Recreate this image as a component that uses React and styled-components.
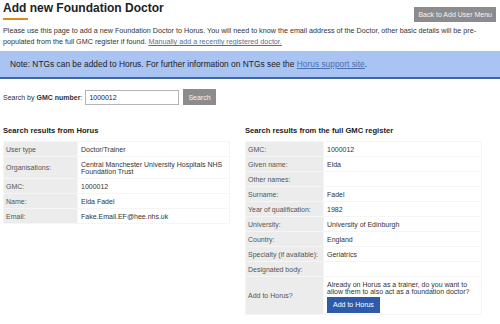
import React from "react";
import styled, { createGlobalStyle } from "styled-components";

const GlobalStyle = createGlobalStyle`
  html, body {
    margin: 0;
    padding: 0;
    background: #fff;
  }
  body {
    font-family: "Liberation Sans", Arial, sans-serif;
    color: #333;
  }
`;

const Page = styled.div`
  width: 500px;
  height: 324px;
  overflow: hidden;
  padding: 0 3px;
  box-sizing: border-box;
`;

const Header = styled.div`
  display: flex;
  justify-content: space-between;
  align-items: flex-start;
`;

const TitleBlock = styled.div`
  padding-top: 1px;
`;

const Title = styled.h1`
  margin: 0;
  font-size: 12px;
  line-height: 14px;
  font-weight: bold;
  color: #222;
`;

const TitleBar = styled.div`
  width: 25px;
  height: 2px;
  margin-top: 3px;
  background: #e08a16;
`;

const GreyButton = styled.button`
  border: none;
  background: #8c8c8c;
  color: #f4f4f4;
  font-family: inherit;
  font-size: ${(p) => p.$size || 7}px;
  padding: ${(p) => p.$pad || "0 5px"};
  height: ${(p) => p.$h || 15}px;
  margin-top: ${(p) => p.$top || 0}px;
  cursor: pointer;
`;

const Intro = styled.p`
  margin: 3px 0 0;
  font-size: 7.2px;
  line-height: 11px;
  color: #333;
`;

const SoftLink = styled.a`
  color: #5b6f8f;
  text-decoration: underline;
`;

const Note = styled.div`
  margin: 4px -3px 0;
  height: 26px;
  padding: 0 10px;
  display: flex;
  align-items: center;
  background: #a9c4f2;
  border-bottom: 2px solid #3d64a6;
  font-size: 8.4px;
  font-weight: normal;
  color: #222;
`;

const NoteLink = styled.a`
  color: #4a6fb3;
  text-decoration: underline;
`;

const SearchRow = styled.div`
  display: flex;
  align-items: center;
  margin-top: 10px;
  font-size: 7px;
  color: #333;
  gap: 3px;
`;

const Input = styled.input`
  width: 94px;
  height: 15px;
  box-sizing: border-box;
  border: 1px solid #b5b5b5;
  font-family: inherit;
  font-size: 7px;
  padding: 0 3px;
  color: #222;
  margin-right: 1px;
`;

const Columns = styled.div`
  display: grid;
  grid-template-columns: 242px 237px;
  margin-top: 21px;
`;

const Column = styled.div`
  display: flex;
  flex-direction: column;
  align-items: flex-start;
`;

const SectionTitle = styled.h2`
  margin: 0;
  font-size: 7.6px;
  line-height: 10px;
  font-weight: bold;
  color: #222;
`;

const Table = styled.table`
  width: ${(p) => p.$w}px;
  margin-top: 5px;
  border-collapse: separate;
  border-spacing: 1px;
  background: #f5f5f5;
  font-size: 7px;
  table-layout: fixed;
`;

const Label = styled.td`
  width: ${(p) => p.$w}px;
  background: #ececec;
  color: #555;
  padding: 0 2px;
  height: ${(p) => p.$h || 14}px;
  line-height: 7px;
  white-space: nowrap;
  vertical-align: middle;
`;

const Value = styled.td`
  background: #fff;
  color: #333;
  padding: 0 3px;
  line-height: 7px;
  vertical-align: middle;
`;

const AddCell = styled.div`
  padding: 3px 0 1px;
  line-height: 7px;
  display: flex;
  flex-direction: column;
  align-items: flex-start;
  gap: 2px;
`;

const BlueButton = styled.button`
  border: none;
  background: #2e5ba9;
  color: #fff;
  font-family: inherit;
  font-size: 7px;
  height: 16px;
  padding: 0 6px;
  cursor: pointer;
`;

const horus = [
  ["User type", "Doctor/Trainer"],
  ["Organisations:", "Central Manchester University Hospitals NHS Foundation Trust", 21],
  ["GMC:", "1000012"],
  ["Name:", "Elda Fadel"],
  ["Email:", "Fake.Email.EF@hee.nhs.uk"],
];

const gmc = [
  ["GMC:", "1000012"],
  ["Given name:", "Elda"],
  ["Other names:", ""],
  ["Surname:", "Fadel"],
  ["Year of qualification:", "1982"],
  ["University:", "University of Edinburgh"],
  ["Country:", "England"],
  ["Specialty (if available):", "Geriatrics"],
  ["Designated body:", ""],
];

export default function App() {
  return (
    <>
      <GlobalStyle />
      <Page>
        <Header>
          <TitleBlock>
            <Title>Add new Foundation Doctor</Title>
            <TitleBar />
          </TitleBlock>
          <GreyButton $top={7} $h={15} $pad="0 4px" style={{ marginRight: 1 }}>
            Back to Add User Menu
          </GreyButton>
        </Header>
        <Intro>
          Please use this page to add a new Foundation Doctor to Horus. You will need to know the
          email address of the Doctor, other basic details will be pre-populated from the full GMC
          register if found. <SoftLink href="#">Manually add a recently registered doctor.</SoftLink>
        </Intro>
        <Note>
          Note: NTGs can be added to Horus. For further information on NTGs see the&nbsp;
          <NoteLink href="#">Horus support site</NoteLink>.
        </Note>
        <SearchRow>
          <span>
            Search by <b>GMC number</b>:
          </span>
          <Input defaultValue="1000012" />
          <GreyButton $h={16} $pad="0 5px">Search</GreyButton>
        </SearchRow>
        <Columns>
          <Column>
            <SectionTitle>Search results from Horus</SectionTitle>
            <Table $w={227}>
              <tbody>
                {horus.map(([k, v, h]) => (
                  <tr key={k}>
                    <Label $w={69} $h={h}>{k}</Label>
                    <Value>{v}</Value>
                  </tr>
                ))}
              </tbody>
            </Table>
          </Column>
          <Column>
            <SectionTitle>Search results from the full GMC register</SectionTitle>
            <Table $w={237}>
              <tbody>
                {gmc.map(([k, v]) => (
                  <tr key={k}>
                    <Label $w={73}>{k}</Label>
                    <Value>{v}</Value>
                  </tr>
                ))}
                <tr>
                  <Label $w={73} $h={37}>Add to Horus?</Label>
                  <Value>
                    <AddCell>
                      <span>
                        Already on Horus as a trainer, do you want to allow them to also act as a
                        foundation doctor?
                      </span>
                      <BlueButton>Add to Horus</BlueButton>
                    </AddCell>
                  </Value>
                </tr>
              </tbody>
            </Table>
          </Column>
        </Columns>
      </Page>
    </>
  );
}
